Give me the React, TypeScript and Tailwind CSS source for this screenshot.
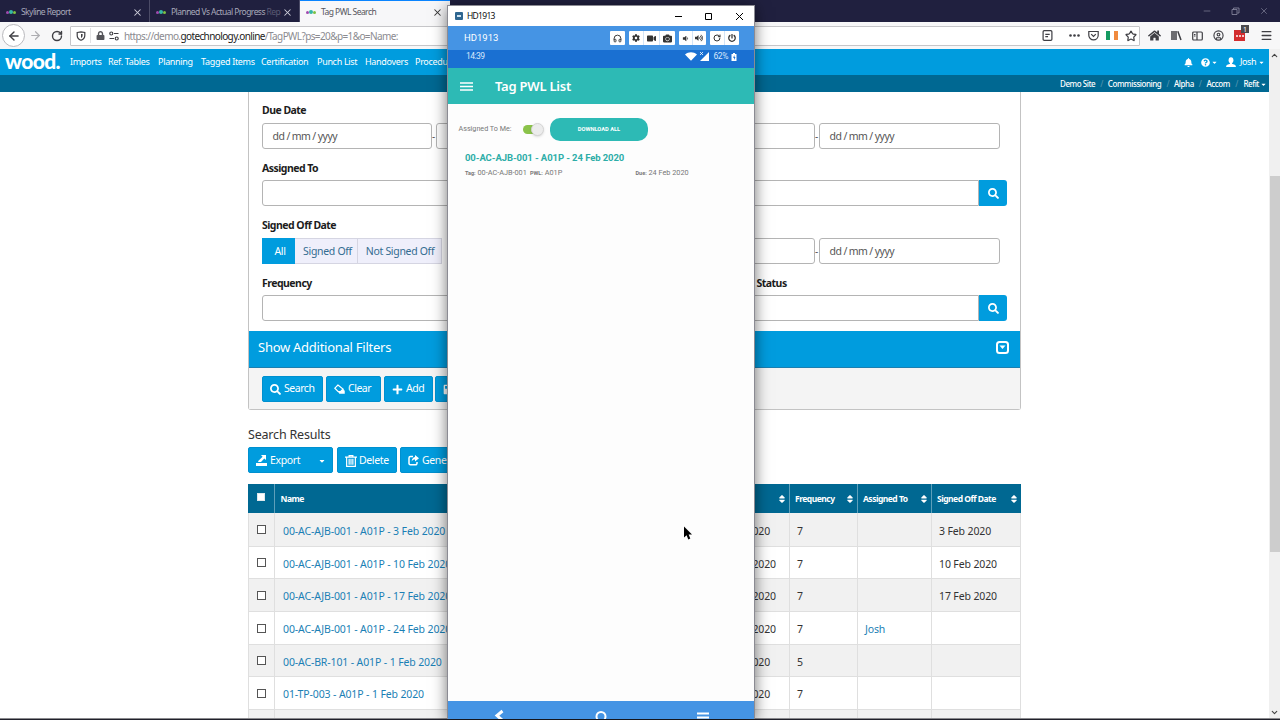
import React from 'react';
import {
    FaBell, FaCamera, FaCog, FaHome, FaLock, FaPlus, FaPowerOff, FaQuestionCircle, FaSearch, FaVideo,
    FaVolumeDown, FaVolumeUp, FaSort, FaCaretDown, FaSave,
} from 'react-icons/fa';
import { ArrowLeft, ArrowRight, ChevronDown, ChevronUp, CircleUser, Headphones, Menu, Minus, RotateCw, Star, X } from 'lucide-react';

const tabs = [
    { title: 'Skyline Report', active: false },
    { title: 'Planned Vs Actual Progress Rep', active: false },
    { title: 'Tag PWL Search', active: true },
];

const navItems = [
    { label: 'Imports', width: 'w-[38px]' },
    { label: 'Ref. Tables', width: 'w-[50px]' },
    { label: 'Planning', width: 'w-[43px]' },
    { label: 'Tagged Items', width: 'w-[60px]' },
    { label: 'Certification', width: 'w-[56px]' },
    { label: 'Punch List', width: 'w-[48px]' },
    { label: 'Handovers', width: 'w-[50px]' },
    { label: 'Procedures', width: 'w-[50px]' },
];

const rows = [
    { name: '00-AC-AJB-001 - A01P - 3 Feb 2020', due: '3 Feb 2020', freq: '7', to: '', signed: '3 Feb 2020', height: 'h-[34px]' },
    { name: '00-AC-AJB-001 - A01P - 10 Feb 2020', due: '10 Feb 2020', freq: '7', to: '', signed: '10 Feb 2020', height: 'h-[32px]' },
    { name: '00-AC-AJB-001 - A01P - 17 Feb 2020', due: '17 Feb 2020', freq: '7', to: '', signed: '17 Feb 2020', height: 'h-[33px]' },
    { name: '00-AC-AJB-001 - A01P - 24 Feb 2020', due: '24 Feb 2020', freq: '7', to: 'Josh', signed: '', height: 'h-[33px]' },
    { name: '00-AC-BR-101 - A01P - 1 Feb 2020', due: '1 Feb 2020', freq: '5', to: '', signed: '', height: 'h-[32px]' },
    { name: '01-TP-003 - A01P - 1 Feb 2020', due: '1 Feb 2020', freq: '7', to: '', signed: '', height: 'h-[33px]' },
    { name: '', due: '', freq: '', to: '', signed: '', height: 'h-[33px]' },
];

function Dots() {
    return (
        <span className="flex items-center">
            <i className="size-[3px] rounded-full bg-[#a04bb0]" />
            <i className="size-[4px] rounded-full bg-[#35b7a6]" />
            <i className="size-[3px] rounded-full bg-[#7cc143]" />
        </span>
    );
}

function TabStrip() {
    return (
        <div className="flex h-[22px] shrink-0 bg-[#20203f]">
            {tabs.map((tab) => (
                <div
                    key={tab.title}
                    className={
                        tab.active
                            ? 'flex w-[150px] items-center border-t border-[#0a84ff] bg-[#f7f7f9] pl-[6px] pr-[7px] pt-px text-[#55555c]'
                            : 'flex w-[150px] items-center border-r border-[#4b4b66] pl-[6px] pr-[6px] pt-[2px] text-[#a9a9ba]'
                    }
                >
                    <Dots />
                    <span className="ml-[5px] w-[112px] whitespace-nowrap text-[8.5px] tracking-[-0.065em]">
                        {tab.title.endsWith(' Rep') ? (
                            <>{tab.title.slice(0, -3)}<span className="text-[#5a5a74]">Rep</span></>
                        ) : tab.title}
                    </span>
                    <X className={tab.active ? 'ml-auto size-[11px] shrink-0 text-[#333]' : 'ml-auto size-[11px] shrink-0 text-[#d0d0dc]'} strokeWidth={2.2} />
                </div>
            ))}
            <div className="ml-auto flex items-center gap-[19px] pr-[11px] text-[#8d8da3]">
                <Minus className="size-[10px]" strokeWidth={1.5} />
                <svg className="size-[9px]" viewBox="0 0 9 9" fill="none" stroke="currentColor" strokeWidth=".8">
                    <path d="M1 2.5h5v5H1zM2.500 2.500V1H8v5H6.500" />
                </svg>
                <X className="size-[10px]" strokeWidth={1.5} />
            </div>
        </div>
    );
}

function Toolbar() {
    return (
        <div className="flex h-[27px] shrink-0 items-center bg-[#f7f7f8] text-[#3f3f44]">
            <div className="ml-[2px] flex size-[23px] shrink-0 items-center justify-center rounded-full border border-[#b9b9bd] bg-white">
                <ArrowLeft className="size-[14px]" strokeWidth={2.4} />
            </div>
            <ArrowRight className="ml-[4px] size-[13px] shrink-0 text-[#aeaeb2]" strokeWidth={2.2} />
            <RotateCw className="ml-[9px] size-[12px] shrink-0" strokeWidth={2.8} />
            <div className="ml-[7px] flex h-[20px] w-[1070px] shrink-0 items-center rounded-[1px] border border-[#c6c6c9] bg-white">
                <svg className="ml-[5px] size-[10px]" viewBox="0 0 10 10" fill="none" stroke="currentColor" strokeWidth="1.2">
                    <path d="M1.200 1.500 5 .8l3.800.7v3C8.800 7 7 8.500 5 9.300 3 8.500 1.200 7 1.200 4.500z" />
                    <path d="M5 3v4c1-.5 1.600-1.300 1.600-2.500V3z" fill="currentColor" stroke="none" />
                </svg>
                <i className="ml-[4px] h-[15px] w-px bg-[#e2e2e4]" />
                <FaLock className="ml-[5px] size-[9px] text-[#55555a]" />
                <svg className="ml-[4px] size-[10px]" viewBox="0 0 10 10" fill="none" stroke="currentColor" strokeWidth="1.2">
                    <circle cx="2.300" cy="2.500" r="1.500" />
                    <path d="M5 2.500h4.500M.5 7.500H5" />
                    <circle cx="7.700" cy="7.500" r="1.500" />
                </svg>
                <span className="ml-[5px] whitespace-nowrap pt-px text-[10px] tracking-[-0.061em] text-[#8b8b90]">
                    https://demo.<span className="text-[#1b1b20]">gotechnology.online</span>/TagPWL?ps=20&amp;p=1&amp;o=Name:
                </span>
                <div className="ml-auto flex items-center pr-[2px]">
                    <svg className="size-[11px]" viewBox="0 0 10 10" fill="none" stroke="currentColor" strokeWidth="1.100">
                        <rect x="1" y=".6" width="8" height="8.800" rx="1" />
                        <path d="M3 4h4M3 6h2.500" />
                    </svg>
                    <svg className="ml-[16px] h-[3px] w-[11px]" viewBox="0 0 11 3" fill="currentColor">
                        <circle cx="1.500" cy="1.500" r="1.300" /><circle cx="5.500" cy="1.500" r="1.300" /><circle cx="9.500" cy="1.500" r="1.300" />
                    </svg>
                    <svg className="ml-[8px] size-[11px]" viewBox="0 0 11 11" fill="none" stroke="currentColor" strokeWidth="1.200">
                        <path d="M.8 1.500h9.400v3.700a4.700 4.700 0 0 1-9.400 0z" />
                        <path d="m3.200 4.200 2.300 2.300 2.300-2.300" />
                    </svg>
                    <div className="ml-[7px] flex h-[9px] w-[12px]">
                        <i className="w-[4px] bg-[#169b62]" />
                        <i className="w-[4px] bg-white" />
                        <i className="w-[4px] bg-[#f08a3e]" />
                    </div>
                    <Star className="ml-[7px] size-[12px]" strokeWidth={2.4} />
                </div>
            </div>
            <FaHome className="ml-[8px] size-[13px] shrink-0" />
            <svg className="ml-[10px] size-[11px] shrink-0" viewBox="0 0 11 11" fill="none" stroke="currentColor" strokeWidth="1.500">
                <path d="M1 1v9M3 1v9M5 1v9M6.800 1.200 10 10" />
            </svg>
            <svg className="ml-[10px] h-[10px] w-[11px] shrink-0" viewBox="0 0 11 10" fill="none" stroke="currentColor" strokeWidth="1.200">
                <rect x=".7" y="1" width="9.600" height="8" rx="1" />
                <path d="M5 1v8M2 3.500h1.500M2 5h1.500" />
            </svg>
            <CircleUser className="ml-[10px] size-[11px] shrink-0" strokeWidth={2.500} />
            <div className="relative ml-[10px] flex size-[11px] shrink-0 items-center justify-center gap-px bg-[#d32d2f]">
                <i className="size-[2px] rounded-full bg-white" />
                <i className="size-[2px] rounded-full bg-white" />
                <i className="size-[2px] rounded-full bg-white" />
                <span className="absolute -top-[5px] left-[7px] flex h-[8px] w-[8px] items-center justify-center bg-[#4b4b4f] text-[7px] leading-none text-white">1</span>
            </div>
            <Menu className="ml-[15px] size-[13px] shrink-0" strokeWidth={2.400} />
        </div>
    );
}

function SiteHeader() {
    return (
        <>
            <div className="flex h-[26px] shrink-0 items-center bg-[#009cde] text-[9px] text-white">
                <span className="w-[65px] pb-[2px] pl-[5px] font-['Lato'] text-[21px] font-black leading-[24px] tracking-[-0.03em]">wood.</span>
                <div className="flex pl-[5px] tracking-[-0.035em]">
                    {navItems.map((item) => (
                        <span key={item.label} className={`${item.width} whitespace-nowrap`}>{item.label}</span>
                    ))}
                </div>
                <div className="ml-auto flex items-center pr-[4px]">
                    <FaBell className="size-[9px]" />
                    <FaQuestionCircle className="ml-[8px] size-[9px]" />
                    <FaCaretDown className="ml-px size-[7px]" />
                    <svg className="ml-[8px] size-[10px]" viewBox="0 0 10 10" fill="currentColor">
                        <ellipse cx="5" cy="3.200" rx="2.400" ry="3" />
                        <path d="M4 5h2v1.800l3.300 1.200.7 2H0l.7-2L4 6.800z" />
                    </svg>
                    <span className="ml-[4px] tracking-[-0.05em]">Josh</span>
                    <FaCaretDown className="ml-[2px] size-[7px]" />
                </div>
            </div>
            <div className="flex h-[17px] shrink-0 items-center justify-end bg-[#006892] pr-[2px] pt-px text-[8px] font-medium tracking-[-0.055em] text-white">
                <span>Demo Site</span>
                <span className="mx-[5px] text-[#4f93ae]">/</span>
                <span>Commissioning</span>
                <span className="mx-[5px] text-[#4f93ae]">/</span>
                <span>Alpha</span>
                <span className="mx-[5px] text-[#4f93ae]">/</span>
                <span>Accom</span>
                <span className="mx-[5.500px] text-[#4f93ae]">/</span>
                <span>Refit</span>
                <FaCaretDown className="ml-px size-[7px]" />
            </div>
        </>
    );
}

function DateInput({ className, empty }: { className: string; empty?: boolean }) {
    return (
        <div className={`${className} flex h-[26px] items-center rounded-[3px] border border-[#b4b4b4] bg-white pl-[9.500px] pt-[2px] text-[10.5px] tracking-[-0.05em] text-[#555]`}>
            {!empty && <>dd<span className="mx-[2px]">/</span>mm<span className="mx-[2px]">/</span>yyyy</>}
        </div>
    );
}

function SearchInput() {
    return (
        <div className="flex h-[26px] w-[745px]">
            <div className="flex-1 rounded-l-[3px] border border-[#b4b4b4] bg-white" />
            <div className="flex w-[28px] items-center justify-center rounded-r-[3px] bg-[#009cde] text-white">
                <FaSearch className="size-[11px]" />
            </div>
        </div>
    );
}

function Label({ children }: { children: React.ReactNode }) {
    return <div className="flex h-[31px] items-center pb-[4px] text-[10.5px] font-bold tracking-[-0.05em] text-[#1c1c1c]">{children}</div>;
}

const action = 'flex h-[26px] items-center whitespace-nowrap rounded-[2px] border border-[#0090cf] bg-[#009cde] pt-px text-white';

function Filters() {
    return (
        <div className="h-[318px] w-[773px] rounded-b-[3px] border border-t-0 border-[#c3c3c3]">
            <div className="h-[239px] pl-[13px] pt-[5px]">
                <Label>Due Date</Label>
                <div className="-mt-[5px] flex items-center text-[10px] text-[#555]">
                    <DateInput className="w-[170px]" />
                    <span className="w-[4px]">-</span>
                    <DateInput className="w-[180px]" empty />
                    <DateInput className="ml-[19px] w-[180px]" empty />
                    <span className="w-[4px]">-</span>
                    <DateInput className="w-[181px]" />
                </div>
                <div className="pt-[6px]">
                    <Label>Assigned To</Label>
                    <div className="-mt-[6px]"><SearchInput /></div>
                </div>
                <div className="pt-[6px]">
                    <Label>Signed Off Date</Label>
                    <div className="-mt-[5px] flex items-center text-[10px] text-[#555]">
                        <div className="flex h-[26px] w-[180px] text-[10.5px] tracking-[-0.03em] text-[#336c91]">
                            <span className="flex w-[33px] items-center justify-center bg-[#009cde] pl-[3px] pt-[2px] text-white">All</span>
                            <span className="flex w-[63px] items-center justify-center whitespace-nowrap border border-l-0 border-[#d5d5e2] bg-[#efeffb] pl-[3px] pt-[2px]">Signed Off</span>
                            <span className="flex w-[84px] items-center justify-center whitespace-nowrap border border-l-0 border-[#d5d5e2] bg-[#efeffb] pl-px pt-[2px]">Not Signed Off</span>
                        </div>
                        <DateInput className="ml-[193px] w-[180px]" empty />
                        <span className="w-[4px]">-</span>
                        <DateInput className="w-[181px]" />
                    </div>
                </div>
                <div className="pt-[6px]">
                    <div className="flex">
                        <div className="w-[486px]"><Label>Frequency</Label></div>
                        <Label>n Status</Label>
                    </div>
                    <div className="-mt-[6px]"><SearchInput /></div>
                </div>
            </div>
            <div className="flex h-[37px] items-center justify-between border-b border-[#1b7fb0] bg-[#009cde] pb-[3px] pl-[9px] pr-[11px] text-[13px] tracking-[-0.02em] text-white">
                <span>Show Additional Filters</span>
                <svg className="size-[13px]" viewBox="0 0 13 13" fill="none" stroke="currentColor" strokeWidth="2">
                    <rect x="1" y="1" width="11" height="11" rx="2.500" />
                    <path d="M3.500 4.500h6l-3 3.500z" fill="currentColor" stroke="none" />
                </svg>
            </div>
            <div className="flex h-[41px] items-center gap-[3px] bg-[#f4f4f4] pl-[13px] text-[10.5px] tracking-[-0.045em]">
                <div className={`${action} w-[61px] gap-[3px] pl-[7px]`}><FaSearch className="size-[11px]" />Search</div>
                <div className={`${action} w-[55px] gap-[3px] pl-[7px]`}>
                    <svg className="size-[11px]" viewBox="0 0 11 11" fill="none" stroke="currentColor" strokeWidth="1.200">
                        <path d="M4 1 .8 4.200 4 7.500h2.800L9 5z" />
                        <path d="M4 7.500h3L9 5l1.500 2v2.500H5.500z" fill="currentColor" strokeWidth=".5" />
                    </svg>
                    Clear
                </div>
                <div className={`${action} w-[49px] gap-[3px] pl-[7px]`}><FaPlus className="size-[11px]" />Add</div>
                <div className={`${action} -ml-px w-[60px] gap-[3px] pl-[7px]`}><FaSave className="size-[11px]" /></div>
            </div>
        </div>
    );
}

function Results() {
    return (
        <div className="w-[773px]">
            <div className="flex h-[37px] items-end pb-[2px] text-[12.5px] tracking-[-0.015em] text-[#333]">Search Results</div>
            <div className="flex gap-[4px] text-[10.5px] tracking-[-0.035em]">
                <div className={`${action} w-[85px] pl-[7px]`}>
                    <svg className="mr-[3px] size-[11px]" viewBox="0 0 11 11" fill="currentColor">
                        <path d="M0 8h11v3H0z" />
                        <path d="M5 0h5v5L8.300 3.400 5 7H2.200V6L6.600 1.700z" />
                    </svg>
                    Export
                    <FaCaretDown className="ml-auto mr-[6px] size-[8px]" />
                </div>
                <div className={`${action} w-[60px] gap-[2px] pl-[7px]`}>
                    <svg className="size-[12px]" viewBox="0 0 11 11" fill="none" stroke="currentColor" strokeWidth="1.100">
                        <path d="M0 2h11M3.800 2V.6h3.400V2M1.500 2v8.400h8V2M3.800 3.500V9M5.500 3.500V9M7.200 3.500V9" />
                    </svg>
                    Delete
                </div>
                <div className={`${action} -ml-px w-[80px] gap-[3px] pl-[7px]`}>
                    <svg className="size-[11px]" viewBox="0 0 11 11" fill="none" stroke="currentColor" strokeWidth="1.500">
                        <path d="M5 1.500H2.500a1.500 1.500 0 0 0-1.500 1.500v5A1.500 1.500 0 0 0 2.500 9.800h5A1.500 1.500 0 0 0 9 8.300V7" />
                        <path d="M7 0l4 3.300-4 3.200V4.500C5.500 4.500 4.500 5 3.700 6.500 3.800 4 5 2.200 7 2z" fill="currentColor" stroke="none" />
                    </svg>
                    Generate
                </div>
            </div>
            <div className="mt-[11px]">
                <div className="flex h-[29px] items-stretch bg-[#006892] text-[8.5px] font-bold tracking-[-0.06em] text-white">
                    <div className="flex w-[27px] items-center justify-center border-r border-[#5d9fba] pb-[3px]">
                        <i className="size-[8px] border border-[#dfe8ec] bg-white" />
                    </div>
                    <div className="flex w-[405px] items-center border-r border-[#5d9fba] pl-[5.500px] pt-px">Name</div>
                    <div className="flex w-[110px] items-center justify-end border-r border-[#5d9fba] pr-[2px]"><FaSort className="size-[10px]" /></div>
                    <div className="flex w-[68px] items-center justify-between border-r border-[#5d9fba] pl-[5px] pr-[2px] pt-px">Frequency<FaSort className="size-[10px]" /></div>
                    <div className="flex w-[74px] items-center justify-between border-r border-[#5d9fba] pl-[5px] pr-[2px] pt-px">Assigned To<FaSort className="size-[10px]" /></div>
                    <div className="flex flex-1 items-center justify-between pl-[5px] pr-[2px] pt-px">Signed Off Date<FaSort className="size-[10px]" /></div>
                </div>
                {rows.map((row, i) => (
                    <div
                        key={i}
                        className={`${row.height} ${i % 2 ? 'bg-white' : 'bg-[#f1f1f1]'} flex items-stretch border-b border-l border-[#dfdfdf] text-[10.5px] tracking-[-0.012em] text-[#333]`}
                    >
                        <div className="flex w-[26px] items-center justify-center border-r border-[#dfdfdf]">
                            {row.name && <i className="size-[9px] border border-[#555] bg-white" />}
                        </div>
                        <div className="flex w-[405px] items-center whitespace-nowrap border-r border-[#dfdfdf] pl-[8px] pt-[4px] text-[#1b7fb5]">{row.name}</div>
                        <div className="flex w-[110px] items-center whitespace-nowrap border-r border-[#dfdfdf] pl-[38px] pt-[4px]">{row.due}</div>
                        <div className="flex w-[68px] items-center border-r border-[#dfdfdf] pl-[7px] pt-[4px]">{row.freq}</div>
                        <div className="flex w-[74px] items-center border-r border-[#dfdfdf] pl-[7px] pt-[4px] text-[#1b7fb5]">{row.to}</div>
                        <div className="flex flex-1 items-center whitespace-nowrap border-r border-[#dfdfdf] pl-[7px] pt-[4px]">{row.signed}</div>
                    </div>
                ))}
            </div>
        </div>
    );
}

function PhoneWindow() {
    return (
        <div className="absolute left-[447px] top-[5px] flex h-[714px] w-[308px] flex-col border border-b-0 border-[#8b8b93] bg-[#fdfdfd] font-['Roboto',sans-serif] shadow-[0_2px_14px_rgba(0,0,0,0.55)]">
            <div className="flex h-[20px] shrink-0 items-center bg-white pl-[7px] pr-[10px] text-[9px] text-black">
                <div className="flex size-[8px] items-center justify-center rounded-[1px] bg-[#2f6690]"><i className="h-[2px] w-[4px] bg-[#cfe3f2]" /></div>
                <span className="ml-[4px] font-['Open_Sans',sans-serif] text-[8.500px] tracking-[-0.08em]">HD1913</span>
                <svg className="ml-auto h-[10px] w-[70px]" viewBox="0 0 70 10" fill="none" stroke="currentColor" strokeWidth="1">
                    <path d="M1 5.500h7M31.500 2.500h6v6h-6zM62 2l7 7M69 2l-7 7" />
                </svg>
            </div>
            <div className="flex h-[24px] shrink-0 items-center bg-[#4594e4] pl-[16px] pr-[15px] text-[#333]">
                <span className="text-[9.500px] text-white">HD1913</span>
                <div className="ml-auto flex h-[14px] w-[15px] items-center justify-center rounded-[1px] bg-white"><Headphones className="size-[9px]" strokeWidth={2.500} /></div>
                <div className="ml-[4px] flex h-[14px] w-[46px] items-center justify-evenly rounded-[1px] bg-white">
                    <FaCog className="size-[8px]" /><i className="h-full w-px bg-[#d3e4f6]" /><FaVideo className="size-[9px]" /><i className="h-full w-px bg-[#d3e4f6]" /><FaCamera className="size-[9px]" />
                </div>
                <div className="ml-[4px] flex h-[14px] w-[27px] items-center justify-evenly rounded-[1px] bg-white">
                    <FaVolumeDown className="size-[7px]" /><i className="h-full w-px bg-[#d3e4f6]" /><FaVolumeUp className="size-[8px]" />
                </div>
                <div className="ml-[4px] flex h-[14px] w-[29px] items-center justify-evenly rounded-[1px] bg-white">
                    <RotateCw className="size-[8px]" strokeWidth={3} /><i className="h-full w-px bg-[#d3e4f6]" /><FaPowerOff className="size-[8px]" />
                </div>
            </div>
            <div className="flex h-[18px] shrink-0 items-center bg-[#1a70d2] pb-[5px] pl-[18px] pr-[17px] text-[8.5px] text-[#d8e8fb]">
                <span className="tracking-[-0.06em]">14:39</span>
                <svg className="ml-auto h-[9px] w-[25px]" viewBox="0 0 25 9" fill="#fff">
                    <path d="M0 2.500C3.500-.5 8.500-.5 12 2.500L6 8.800zM24 0v9h-9z" />
                    <path d="m15 0 3 3m0-3-3 3" stroke="#fff" strokeWidth=".8" />
                </svg>
                <span className="ml-[3px] tracking-[-0.05em]">62%</span>
                <svg className="ml-[3px] h-[8px] w-[6px]" viewBox="0 0 6 8"><path d="M2 0h2v1h1.500v7H.5V1H2z" fill="#fff" /><path d="M3.500 2 2 4.800h1V7l1.500-3h-1z" fill="#1a70d2" /></svg>
            </div>
            <div className="flex h-[36px] shrink-0 items-center bg-[#2dbab5] pl-[12px] text-white">
                <svg className="h-[9px] w-[13px]" viewBox="0 0 13 9" stroke="currentColor" strokeWidth="1.300"><path d="M0 1h13M0 4.500h13M0 8h13" /></svg>
                <span className="ml-[22px] pt-[2px] font-['Noto_Sans',sans-serif] text-[13px] font-semibold tracking-[-0.018em]">Tag PWL List</span>
            </div>
            <div className="flex-1 pt-[14px]">
                <div className="flex h-[23px] items-center pl-[10.500px] text-[7.200px] text-[#777]">
                    <span className="w-[64px] whitespace-nowrap">Assigned To Me:</span>
                    <div className="relative h-[9px] w-[20px] rounded-full bg-[#8bc34a]">
                        <i className="absolute -top-[2px] right-[-1px] size-[13px] rounded-full border border-[#d5d5d5] bg-[#ececec] shadow-sm" />
                    </div>
                    <div className="ml-[7.500px] flex h-[23px] w-[98px] items-center justify-center rounded-[10px] bg-[#2dbab5] text-[5.700px] font-bold text-white">DOWNLOAD ALL</div>
                </div>
                <div className="mt-[11px] pl-[17px] text-[9.500px] font-bold leading-[12px] tracking-[-0.009em] text-[#2dada8]">00-AC-AJB-001 - A01P - 24 Feb 2020</div>
                <div className="mt-[4px] flex pl-[17px] text-[7.300px] leading-[9px] text-[#777]">
                    <span className="w-[65px] whitespace-nowrap"><b className="text-[5.500px]">Tag:</b> 00-AC-AJB-001</span>
                    <span className="w-[105.500px] whitespace-nowrap"><b className="text-[5.500px]">PWL:</b> A01P</span>
                    <span className="whitespace-nowrap"><b className="text-[5.500px]">Due:</b> 24 Feb 2020</span>
                </div>
            </div>
            <div className="h-[18px] shrink-0 overflow-hidden bg-[#4594e4]">
                <svg className="h-[18px] w-full" viewBox="0 0 306 18" fill="none" stroke="#fff" strokeWidth="2">
                    <path d="M54.500 10 49 14.500l5.500 5" strokeWidth="3" />
                    <circle cx="153" cy="15.500" r="4.500" />
                    <path d="M249 12.500h12M249 16.500h12" />
                </svg>
            </div>
        </div>
    );
}

export default function App() {
    return (
        <div className="relative flex h-[720px] w-[1280px] flex-col overflow-hidden bg-white font-['Noto_Sans','Open_Sans',sans-serif]">
            <TabStrip />
            <Toolbar />
            <div className="flex min-h-0 flex-1">
                <div className="flex w-[1269px] flex-col">
                    <SiteHeader />
                    <div className="min-h-0 flex-1 overflow-hidden pl-[248px]">
                        <Filters />
                        <Results />
                    </div>
                </div>
                <div className="flex flex-1 flex-col items-center bg-[#f0f0f0] text-[#444]">
                    <ChevronUp className="mt-[2px] size-[9px]" strokeWidth={3} />
                    <div className="mt-[116px] h-[376px] w-[10px] bg-[#cdcdcd]" />
                    <ChevronDown className="mb-px mt-auto size-[9px]" strokeWidth={3} />
                </div>
            </div>
            <div className="h-[2px] shrink-0 border-t border-[#8a8a8e] bg-[#20202a]" />
            <PhoneWindow />
            <svg className="absolute left-[683px] top-[526px] h-[15px] w-[10px]" viewBox="0 0 10 15">
                <path d="M1 .5v11l2.600-2.300L5.300 13.500l2-.9L5.600 8.600H9z" fill="#000" />
            </svg>
        </div>
    );
}
